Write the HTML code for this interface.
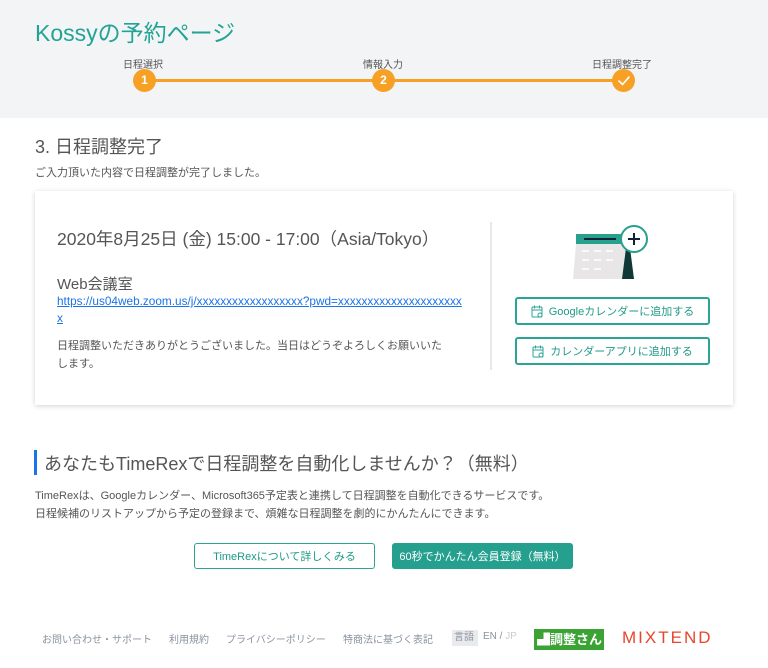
<!DOCTYPE html>
<html><head><meta charset="utf-8"><style>
*{margin:0;padding:0;box-sizing:border-box}
body{width:768px;height:668px;background:#fff;font-family:"Liberation Sans","Noto Sans CJK JP",sans-serif;color:#555;position:relative;overflow:hidden}
.a{position:absolute;white-space:nowrap}
.hdr{position:absolute;left:0;top:0;width:768px;height:118px;background:#f3f4f6}
.c{position:absolute;width:23px;height:23px;border-radius:50%;background:#f6a125;color:#fff;font-size:12px;font-weight:bold;text-align:center;line-height:23px;top:69px}
.btn{position:absolute;border:2px solid #2aa593;border-radius:3px;color:#1f9a88;font-size:11px;display:flex;align-items:center;justify-content:center}
.btn svg{margin-right:6px}
</style></head><body>
<div class="hdr"></div>
<div class="a" style="left:35px;top:14px;font-size:23px;color:#21a493">Kossyの予約ページ</div>
<div class="a" style="left:123px;top:56px;font-size:10px;color:#555">日程選択</div>
<div class="a" style="left:363px;top:56px;font-size:10px;color:#555">情報入力</div>
<div class="a" style="left:592px;top:56px;font-size:10px;color:#555">日程調整完了</div>
<div class="a" style="left:144px;top:79px;width:480px;height:3px;background:#f6a125"></div>
<div class="c" style="left:133px">1</div>
<div class="c" style="left:372px">2</div>
<div class="c" style="left:612px"><svg width="23" height="23"><path d="M6.5 11.5l4 4 7-8" stroke="#fff" stroke-width="1.6" fill="none"/></svg></div>

<div class="a" style="left:35px;top:133px;font-size:18px;color:#555">3. 日程調整完了</div>
<div class="a" style="left:35px;top:164px;font-size:11px;color:#555">ご入力頂いた内容で日程調整が完了しました。</div>

<div class="a" style="left:35px;top:191px;width:698px;height:214px;background:#fff;box-shadow:0 1px 5px rgba(0,0,0,.18)"></div>
<div class="a" style="left:57px;top:226px;font-size:17.5px;color:#555">2020年8月25日 (金) 15:00 - 17:00（Asia/Tokyo）</div>
<div class="a" style="left:57px;top:273px;font-size:15px;color:#555">Web会議室</div>
<div class="a" style="left:57px;top:293px;font-size:11.8px;color:#1a73e8;text-decoration:underline;line-height:17px">https://us04web.zoom.us/j/xxxxxxxxxxxxxxxxxx?pwd=xxxxxxxxxxxxxxxxxxxxx<br>x</div>
<div class="a" style="left:57px;top:337px;font-size:11px;color:#555;line-height:18px">日程調整いただきありがとうございました。当日はどうぞよろしくお願いいた<br>します。</div>
<div class="a" style="left:490px;top:222px;width:2px;height:148px;background:#e6e8ec"></div>
<svg class="a" style="left:570px;top:220px" width="90" height="62">
<rect x="6" y="14" width="50" height="10" fill="#28a08e"/>
<rect x="6" y="24" width="50" height="35" fill="#e9e6e8"/>
<path d="M6 24 L6 59 L3 59 Z" fill="#e9e6e8"/>
<line x1="14" y1="19" x2="46" y2="19" stroke="#123" stroke-width="2"/>
<g stroke="#fff" stroke-width="1.5"><line x1="12" y1="31" x2="19" y2="31"/><line x1="24" y1="31" x2="31" y2="31"/><line x1="36" y1="31" x2="43" y2="31"/><line x1="12" y1="40" x2="19" y2="40"/><line x1="24" y1="40" x2="31" y2="40"/><line x1="36" y1="40" x2="43" y2="40"/><line x1="12" y1="49" x2="19" y2="49"/><line x1="24" y1="49" x2="31" y2="49"/></g>
<path d="M52 59 L56 28 L60 28 L64 59 Z" fill="#0f3836"/>
<circle cx="64" cy="19" r="13" fill="#fff" stroke="#28a08e" stroke-width="2"/>
<path d="M58 19h12M64 13v12" stroke="#123" stroke-width="2"/>
</svg>
<div class="btn" style="left:515px;top:297px;width:195px;height:28px"><svg width="12" height="13"><rect x="1" y="2" width="10" height="10" rx="1" fill="none" stroke="#2aa593"/><path d="M3.5 0.5v3M8.5 0.5v3M1 5h10" stroke="#2aa593"/><circle cx="9" cy="10" r="2" fill="#fff" stroke="#2aa593"/></svg>Googleカレンダーに追加する</div>
<div class="btn" style="left:515px;top:337px;width:195px;height:28px"><svg width="12" height="13"><rect x="1" y="2" width="10" height="10" rx="1" fill="none" stroke="#2aa593"/><path d="M3.5 0.5v3M8.5 0.5v3M1 5h10" stroke="#2aa593"/><circle cx="9" cy="10" r="2" fill="#fff" stroke="#2aa593"/></svg>カレンダーアプリに追加する</div>

<div class="a" style="left:34px;top:450px;width:3px;height:25px;background:#1a73e8"></div>
<div class="a" style="left:44px;top:450px;font-size:18px;color:#555">あなたもTimeRexで日程調整を自動化しませんか？（無料）</div>
<div class="a" style="left:35px;top:487px;font-size:11px;color:#555;line-height:18px">TimeRexは、Googleカレンダー、Microsoft365予定表と連携して日程調整を自動化できるサービスです。<br>日程候補のリストアップから予定の登録まで、煩雑な日程調整を劇的にかんたんにできます。</div>
<div class="btn" style="left:194px;top:543px;width:181px;height:26px;border-width:1px">TimeRexについて詳しくみる</div>
<div class="btn" style="left:392px;top:543px;width:181px;height:26px;background:#25a08f;color:#fff;border-color:#25a08f">60秒でかんたん会員登録（無料）</div>

<div class="a" style="left:42px;top:631px;font-size:10px;color:#8a93a0">お問い合わせ・サポート</div>
<div class="a" style="left:169px;top:631px;font-size:10px;color:#8a93a0">利用規約</div>
<div class="a" style="left:226px;top:631px;font-size:10px;color:#8a93a0">プライバシーポリシー</div>
<div class="a" style="left:343px;top:631px;font-size:10px;color:#8a93a0">特商法に基づく表記</div>
<div class="a" style="left:452px;top:630px;width:26px;height:16px;background:#e9eaec;font-size:10px;color:#8a93a0;padding-left:2px;line-height:16px">言語</div>
<div class="a" style="left:483px;top:631px;font-size:10px;color:#8a93a0">EN / <span style="color:#ccc">JP</span></div>
<div class="a" style="left:534px;top:629px;width:70px;height:21px;background:#3aa334;color:#fff;font-size:13px;font-weight:bold;line-height:21px;padding-left:3px">▟調整さん</div>
<div class="a" style="left:622px;top:628px;font-size:17px;color:#e8452d;letter-spacing:2px">MIXTEND</div>
</body></html>
